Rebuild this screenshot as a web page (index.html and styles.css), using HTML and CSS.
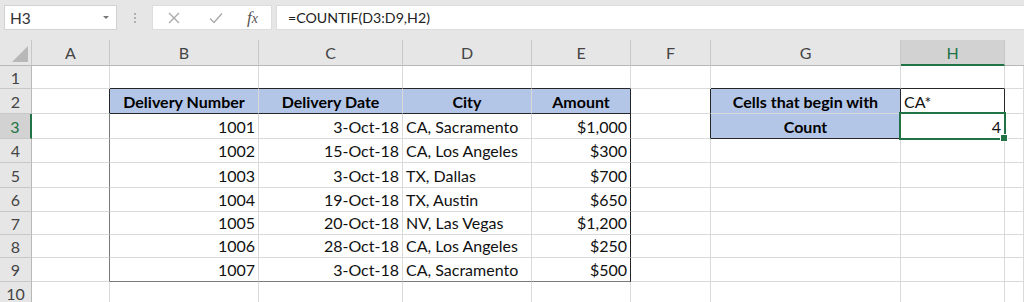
FILE: index.html
```html
<!DOCTYPE html>
<html>
<head>
<meta charset="utf-8">
<link rel="stylesheet" href="styles.css">
</head>
<body>
<div class="app">
  <div class="topbar">
    <div class="namebox"><span class="nb-text">H3</span><span class="nb-arrow"></span></div>
    <div class="sep"><span></span><span></span><span></span></div>
    <div class="fbtns">
      <svg class="ico" width="14" height="14" viewBox="0 0 14 14"><path d="M2 2L12 12M12 2L2 12" stroke="#a8a8a8" stroke-width="1.3" fill="none"/></svg>
      <svg class="ico" width="16" height="14" viewBox="0 0 16 14"><path d="M2 7.5L6 11.5L14 2.5" stroke="#a8a8a8" stroke-width="1.3" fill="none"/></svg>
      <span class="fx"><i>f</i><i class="fx-x">x</i></span>
    </div>
    <div class="formula">=COUNTIF(D3:D9,H2)</div>
  </div>
  <div class="sheet">
    <div class="ch corner"><span class="tri"></span></div>
    <div class="ch">A</div><div class="ch">B</div><div class="ch">C</div><div class="ch">D</div><div class="ch">E</div><div class="ch">F</div><div class="ch">G</div><div class="ch sel">H</div><div class="ch last"></div>

    <div class="rh">1</div>
    <div class="c"></div><div class="c bk"></div><div class="c bk"></div><div class="c bk"></div><div class="c bk"></div><div class="c"></div><div class="c bk"></div><div class="c bk"></div><div class="c"></div>

    <div class="rh">2</div>
    <div class="c rk"></div>
    <div class="c hd bk">Delivery Number</div>
    <div class="c hd bk">Delivery Date</div>
    <div class="c hd bk">City</div>
    <div class="c hd bk rk">Amount</div>
    <div class="c rk"></div>
    <div class="c hd rk">Cells that begin with</div>
    <div class="c l rk">CA*</div>
    <div class="c"></div>

    <div class="rh rsel">3</div>
    <div class="c rg"></div>
    <div class="c n">1001</div><div class="c n">3-Oct-18</div><div class="c l">CA, Sacramento</div><div class="c n rk">$1,000</div>
    <div class="c rk"></div>
    <div class="c hd rk bk">Count</div>
    <div class="c n active">4</div>
    <div class="c"></div>

    <div class="rh">4</div>
    <div class="c rg"></div>
    <div class="c n">1002</div><div class="c n">15-Oct-18</div><div class="c l">CA, Los Angeles</div><div class="c n rk">$300</div>
    <div class="c"></div><div class="c"></div><div class="c"></div><div class="c"></div>

    <div class="rh">5</div>
    <div class="c rg"></div>
    <div class="c n">1003</div><div class="c n">3-Oct-18</div><div class="c l">TX, Dallas</div><div class="c n rk">$700</div>
    <div class="c"></div><div class="c"></div><div class="c"></div><div class="c"></div>

    <div class="rh">6</div>
    <div class="c rg"></div>
    <div class="c n">1004</div><div class="c n">19-Oct-18</div><div class="c l">TX, Austin</div><div class="c n rk">$650</div>
    <div class="c"></div><div class="c"></div><div class="c"></div><div class="c"></div>

    <div class="rh">7</div>
    <div class="c rg"></div>
    <div class="c n">1005</div><div class="c n">20-Oct-18</div><div class="c l">NV, Las Vegas</div><div class="c n rk">$1,200</div>
    <div class="c"></div><div class="c"></div><div class="c"></div><div class="c"></div>

    <div class="rh">8</div>
    <div class="c rg"></div>
    <div class="c n">1006</div><div class="c n">28-Oct-18</div><div class="c l">CA, Los Angeles</div><div class="c n rk">$250</div>
    <div class="c"></div><div class="c"></div><div class="c"></div><div class="c"></div>

    <div class="rh">9</div>
    <div class="c rg"></div>
    <div class="c n bg">1007</div><div class="c n bg">3-Oct-18</div><div class="c l bg">CA, Sacramento</div><div class="c n rk bg">$500</div>
    <div class="c"></div><div class="c"></div><div class="c"></div><div class="c"></div>

    <div class="rh">10</div>
    <div class="c"></div><div class="c"></div><div class="c"></div><div class="c"></div><div class="c"></div><div class="c"></div><div class="c"></div><div class="c"></div><div class="c"></div>
  </div>
</div>
</body>
</html>
```
FILE: styles.css
```css
* { box-sizing: border-box; }
html, body { margin: 0; padding: 0; background: #fff; }
body { font-family: "Lato", "Liberation Sans", sans-serif; color: #000; }
.app { width: 1024px; height: 302px; overflow: hidden; }

.topbar {
  height: 40px;
  background: #e6e6e6;
  display: flex;
  align-items: flex-start;
  padding: 5px 0 0 4px;
}
.namebox {
  width: 113px; height: 25px;
  background: #fff;
  border: 1px solid #d2d2d2;
  display: flex; align-items: center; justify-content: space-between;
  padding: 0 7px 0 5px;
  font-size: 15.5px; color: #333;
}
.nb-arrow {
  width: 0; height: 0;
  border-left: 3px solid transparent;
  border-right: 3px solid transparent;
  border-top: 3px solid #777;
}
.sep {
  width: 35px; height: 25px;
  display: flex; flex-direction: column; align-items: center; justify-content: center; gap: 2px;
}
.sep span { width: 2px; height: 2px; background: #b0b0b0; display: block; }
.fbtns {
  width: 120px; height: 25px;
  background: #fff;
  border: 1px solid #dcdcdc;
  display: flex; align-items: center;
  padding-left: 14px; gap: 27px;
}
.fx {
  font-family: "Liberation Serif", serif;
  font-size: 17px; color: #555;
  margin-left: -4px;
}
.fx-x { font-size: 14px; }
.formula {
  flex: 1;
  height: 25px;
  margin-left: 4px;
  background: #fff;
  border: 1px solid #dcdcdc;
  border-right: none;
  display: flex; align-items: center;
  padding-left: 11px;
  font-size: 14.2px; color: #222;
}

.sheet {
  display: grid;
  grid-template-columns: 32px 78px 149px 144px 129px 99px 80px 190px 104px 1fr;
  grid-template-rows: 26px 23px 25px 25px 24px 25px 24px 23px 23px 24px 24px;
  font-size: 16px;
}
.ch {
  background: #e6e6e6;
  border-right: 1px solid #c8c8c8;
  border-bottom: 1px solid #b8b8b8;
  display: flex; align-items: center; justify-content: center;
  font-size: 16px; color: #444;
}
.ch.last { border-right: none; }
.ch.sel {
  background: #d2d2d2;
  color: #217346;
  border-bottom: 2px solid #217346;
}
.corner { position: relative; }
.tri {
  position: absolute; right: 3px; bottom: 3px;
  width: 0; height: 0;
  border-left: 16px solid transparent;
  border-bottom: 16px solid #b8b8b8;
}
.rh {
  background: #e6e6e6;
  border-right: 1px solid #b8b8b8;
  border-bottom: 1px solid #c8c8c8;
  display: flex; align-items: center; justify-content: center;
  font-size: 16px; color: #444;
}
.rh.rsel {
  background: #d2d2d2;
  color: #217346;
  border-right: 2px solid #217346;
}
.c {
  border-right: 1px solid #dadada;
  border-bottom: 1px solid #dadada;
  display: flex; align-items: flex-end;
  padding: 0 3px 2px 3px;
  white-space: nowrap;
  position: relative;
  color: #111;
}
.c.n { justify-content: flex-end; }
.c.l { justify-content: flex-start; }
.c.hd {
  background: #b4c6e7;
  font-weight: 700;
  justify-content: center;
  color: #000;
}
.c.rk { border-right-color: #262626; }
.c.bk { border-bottom-color: #262626; }
.c.rg { border-right-color: #7a7a7a; }
.c.bg { border-bottom-color: #7a7a7a; }
.c.active {
  outline: 2px solid #217346;
  outline-offset: -1px;
  z-index: 2;
  margin: -1px 0 0 -1px;
}
.c.active::after {
  content: "";
  position: absolute;
  right: -4px; bottom: -4px;
  width: 6px; height: 6px;
  background: #217346;
  border: 1px solid #fff;
}
```
